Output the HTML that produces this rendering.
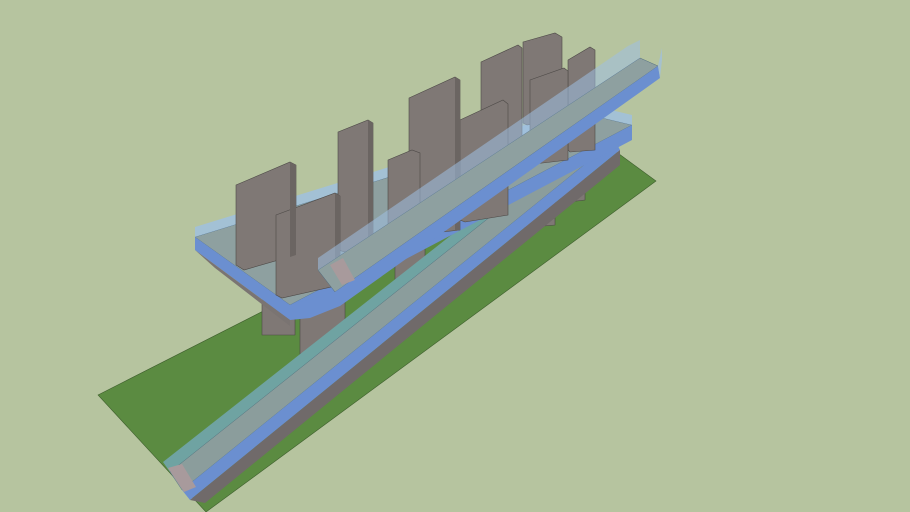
<!DOCTYPE html>
<html><head><style>html,body{margin:0;padding:0;background:#b6c49f;width:910px;height:512px;overflow:hidden}</style></head>
<body>
<svg width="910" height="512" viewBox="0 0 910 512" xmlns="http://www.w3.org/2000/svg">
<rect width="910" height="512" fill="#b6c49f"/>
<polygon points="98,395 600,140 656,181 206,512" fill="#5b8b41" stroke="#3f5f2e" stroke-width="0.6"/>
<g fill="#7f7875" stroke="#4d4947" stroke-width="0.6">
<polygon points="262,300 295,300 295,335 262,335"/>
<polygon points="300,300 345,292 345,355 300,360"/>
<polygon points="395,245 425,240 425,285 395,290"/>
<polygon points="520,195 555,188 555,225 520,228"/>
<polygon points="560,172 585,168 585,200 560,203"/>
</g>
<!-- lower ramp -->
<polygon points="163,462 600,118 604,126 170,472" fill="#6fa3a2"/>
<polygon points="170,472 604,126 615,140 182,490" fill="#8b9d9c" stroke="#4d6a80" stroke-width="0.4"/>
<polygon points="182,490 615,140 620,150 190,500" fill="#6b8fd0"/>
<polygon points="190,500 620,150 620,165 205,503" fill="#706a6a"/>
<polygon points="168,468 182,464 196,487 184,492" fill="#a89a9c"/>
<!-- platform -->
<polygon points="195,237 590,115 632,125 290,305" fill="#8ea0a0" stroke="#4d6a80" stroke-width="0.5"/>
<polygon points="195,237 290,305 290,320 195,250" fill="#6b8fd0"/>
<polygon points="290,305 632,125 632,140 290,320" fill="#6b8fd0"/>
<polygon points="195,250 290,320 290,326 215,268" fill="#7a7472"/>
<polygon points="195,227 590,105 632,115 632,125 590,115 195,237" fill="#9fc0e2" opacity="0.8"/>
<!-- columns -->
<g fill="#7f7875" stroke="#4d4947" stroke-width="0.6">
<polygon points="236,185 290,162 296,165 296,255 244,270 236,265"/>
<polygon points="338,132 368,120 373,123 373,245 345,252 338,250"/>
<polygon points="409,98 455,77 460,80 460,230 415,235 409,233"/>
<polygon points="388,160 412,150 420,153 420,245 395,250 388,248"/>
<polygon points="481,62 518,45 522,48 522,160 485,165 481,163"/>
<polygon points="523,42 555,33 562,37 562,120 527,125 523,123"/>
<polygon points="568,60 590,47 595,50 595,150 570,152 568,150"/>
<polygon points="460,120 503,100 508,104 508,215 465,222 460,220"/>
<polygon points="530,80 564,68 568,71 568,160 534,164 530,162"/>
<polygon points="276,215 335,193 340,196 340,285 282,298 276,295"/>
</g>
<g fill="#6b6562"><polygon points="290,162 296,165 296,255 290,257"/><polygon points="368,120 373,123 373,245 368,246"/><polygon points="455,77 460,80 460,230 455,231"/><polygon points="335,193 340,196 340,285 335,286"/></g>
<!-- upper ramp -->
<polygon points="318,270 640,58 658,66 335,292" fill="#8ea0a0" stroke="#4d6a80" stroke-width="0.5"/>
<polygon points="335,292 658,66 660,78 340,306 310,318 290,320 290,305" fill="#6b8fd0"/>
<polygon points="318,270 640,58 640,40 628,46 318,258" fill="#9fc0e2" opacity="0.55"/>
<polygon points="658,66 662,48 662,60 660,78" fill="#9fc0e2" opacity="0.7"/>
<polygon points="330,265 343,258 355,280 342,285" fill="#a89a9c"/>
</svg>
</body></html>
